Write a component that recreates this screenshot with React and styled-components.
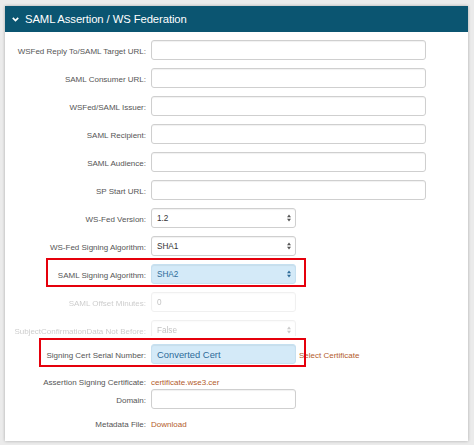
import React from 'react';
import styled, { createGlobalStyle } from 'styled-components';

const GlobalStyle = createGlobalStyle`
  html, body {
    margin: 0;
    padding: 0;
    background: #ebebeb;
    font-family: "Liberation Sans", Arial, sans-serif;
  }
`;

const Page = styled.div`
  width: 474px;
  height: 445px;
  padding: 6px 6px 0 5px;
  box-sizing: border-box;
`;

const Panel = styled.div`
  width: 463px;
  background: #fff;
  box-shadow: 0 0 3px rgba(0, 0, 0, 0.28);
`;

const Header = styled.div`
  height: 26px;
  background: #0b5571;
  color: #fff;
  display: flex;
  align-items: center;
  gap: 6px;
  padding-left: 7px;
  font-size: 11.3px;
  letter-spacing: -0.1px;
`;

const Body = styled.div`
  padding: 8px 0 10px;
`;

const Row = styled.div`
  position: relative;
  display: grid;
  grid-template-columns: 141px auto;
  column-gap: 5px;
  align-items: center;
  margin-bottom: ${p => p.$mb ?? 8}px;
  min-height: ${p => (p.$static ? 17 : 20)}px;

  &::after {
    content: '';
    display: ${p => (p.$box ? 'block' : 'none')};
    position: absolute;
    top: -6px;
    bottom: -3px;
    left: ${p => p.$box?.left ?? 0}px;
    width: ${p => p.$box?.width ?? 0}px;
    border: 2px solid #e5000c;
    box-sizing: border-box;
    pointer-events: none;
  }
`;

const Label = styled.div`
  text-align: right;
  font-size: 8px;
  color: #555;
  padding-top: 3px;
  white-space: nowrap;
`;

const Input = styled.div`
  width: ${p => p.$w}px;
  height: 20px;
  box-sizing: border-box;
  border: 1px solid ${p => (p.$hl ? '#c6e0f0' : '#cfcfcf')};
  border-radius: 3px;
  background: ${p => (p.$hl ? '#d4eaf8' : '#fff')};
  box-shadow: inset 0 1px 1px rgba(0, 0, 0, 0.06);
  display: flex;
  align-items: center;
  justify-content: space-between;
  padding: 0 4px 0 5px;
  font-size: ${p => (p.$big ? 9.4 : 8.2)}px;
  color: ${p => (p.$hl ? '#2d6b98' : '#333')};
`;

const Arrows = styled.svg`
  width: 4px;
  height: 8px;
  flex: none;
`;

const Cell = styled.div`
  display: flex;
  align-items: center;
  gap: 3px;
`;

const Link = styled.span`
  font-size: 8px;
  color: #b35c2c;
  padding-top: 3px;
`;

const Torn = styled.div`
  height: 44px;
  overflow: hidden;
  opacity: 0.3;
  filter: blur(0.7px);
  margin-bottom: 8px;
`;

const Chevron = () => (
  <svg width="7" height="5" viewBox="0 0 7 5">
    <polyline points="0.8,0.9 3.5,3.6 6.2,0.9" fill="none" stroke="#fff" strokeWidth="1.7" />
  </svg>
);

const SelectBox = ({ value, hl }) => (
  <Input $w={145} $hl={hl}>
    <span>{value}</span>
    <Arrows viewBox="0 0 4 8">
      <polygon points="0,3.2 2,0.6 4,3.2" fill={hl ? '#2d6b98' : '#555'} />
      <polygon points="0,4.8 2,7.4 4,4.8" fill={hl ? '#2d6b98' : '#555'} />
    </Arrows>
  </Input>
);

const textRows = [
  'WSFed Reply To/SAML Target URL:',
  'SAML Consumer URL:',
  'WSFed/SAML Issuer:',
  'SAML Recipient:',
  'SAML Audience:',
  'SP Start URL:',
];

const App = () => (
  <>
    <GlobalStyle />
    <Page>
      <Panel>
        <Header>
          <Chevron />
          <span>SAML Assertion / WS Federation</span>
        </Header>
        <Body>
          {textRows.map(label => (
            <Row key={label}>
              <Label>{label}</Label>
              <Input $w={275} />
            </Row>
          ))}
          <Row>
            <Label>WS-Fed Version:</Label>
            <SelectBox value="1.2" />
          </Row>
          <Row>
            <Label>WS-Fed Signing Algorithm:</Label>
            <SelectBox value="SHA1" />
          </Row>
          <Row $box={{ left: 41, width: 260 }}>
            <Label>SAML Signing Algorithm:</Label>
            <SelectBox value="SHA2" hl />
          </Row>

          <Torn>
            <Row>
              <Label>SAML Offset Minutes:</Label>
              <Input $w={145}>0</Input>
            </Row>
            <Row>
              <Label>SubjectConfirmationData Not Before:</Label>
              <SelectBox value="False" />
            </Row>
          </Torn>

          <Row $box={{ left: 34, width: 267 }}>
            <Label>Signing Cert Serial Number:</Label>
            <Cell>
              <Input $w={145} $hl $big>Converted Cert</Input>
              <Link>Select Certificate</Link>
            </Cell>
          </Row>
          <Row $static $mb={0}>
            <Label>Assertion Signing Certificate:</Label>
            <Link>certificate.wse3.cer</Link>
          </Row>
          <Row $mb={5}>
            <Label>Domain:</Label>
            <Input $w={145} />
          </Row>
          <Row $static $mb={0}>
            <Label>Metadata File:</Label>
            <Link>Download</Link>
          </Row>
        </Body>
      </Panel>
    </Page>
  </>
);

export default App;
